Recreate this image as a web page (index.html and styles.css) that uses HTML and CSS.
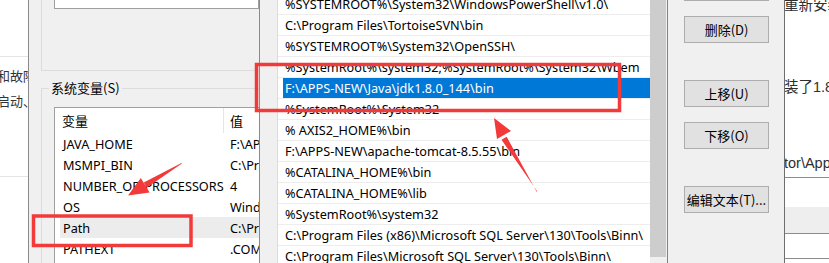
FILE: index.html
```html
<!DOCTYPE html>
<html lang="zh-CN">
<head>
    <meta charset="UTF-8">
    <meta name="viewport" content="width=device-width, initial-scale=1.0">
    <title>编辑环境变量 - Path</title>
    <link rel="stylesheet" href="styles.css">
</head>
<body>
    <div class="screen">
        <!-- article page behind the dialogs, left part -->
        <div class="page page-left">
            <div class="page-rule first"></div>
            <div class="page-text">
                <p>和故障</p>
                <p>启动、</p>
            </div>
            <div class="page-rule second"></div>
        </div>

        <!-- 环境变量 dialog -->
        <div class="env-dialog">
            <div class="group-user">
                <div class="listbox user-list"></div>
            </div>
            <fieldset class="group-sys">
                <legend>系统变量(S)</legend>
                <div class="listbox sys-list">
                    <div class="sys-head">
                        <div class="col-name">变量</div>
                        <div class="col-value">值</div>
                    </div>
                    <div class="sys-row"><span class="col-name">JAVA_HOME</span><span class="col-value">F:\APPS-NEW\Java\jdk1.8.0_144</span></div>
                    <div class="sys-row"><span class="col-name">MSMPI_BIN</span><span class="col-value">C:\Program Files\Microsoft MPI\Bin\</span></div>
                    <div class="sys-row"><span class="col-name">NUMBER_OF_PROCESSORS</span><span class="col-value">4</span></div>
                    <div class="sys-row"><span class="col-name">OS</span><span class="col-value">Windows_NT</span></div>
                    <div class="sys-row selected"><span class="col-name">Path</span><span class="col-value">C:\Program Files\Common Files\Oracle\Java\javapath</span></div>
                    <div class="sys-row"><span class="col-name">PATHEXT</span><span class="col-value">.COM;.EXE;.BAT;.CMD;.VBS;.VBE;.JS</span></div>
                </div>
            </fieldset>
        </div>

        <!-- 编辑环境变量 dialog -->
        <div class="edit-dialog">
            <div class="path-list">
                <div class="path-rows">
                    <div class="path-row"><span>%SYSTEMROOT%\System32\WindowsPowerShell\v1.0\</span></div>
                    <div class="path-row"><span>C:\Program Files\TortoiseSVN\bin</span></div>
                    <div class="path-row"><span>%SYSTEMROOT%\System32\OpenSSH\</span></div>
                    <div class="path-row"><span>%SystemRoot%\system32;%SystemRoot%\System32\Wbem</span></div>
                    <div class="path-row active"><span>F:\APPS-NEW\Java\jdk1.8.0_144\bin</span></div>
                    <div class="path-row"><span>%SystemRoot%\System32</span></div>
                    <div class="path-row"><span>% AXIS2_HOME%\bin</span></div>
                    <div class="path-row"><span>F:\APPS-NEW\apache-tomcat-8.5.55\bin</span></div>
                    <div class="path-row"><span>%CATALINA_HOME%\bin</span></div>
                    <div class="path-row"><span>%CATALINA_HOME%\lib</span></div>
                    <div class="path-row"><span>%SystemRoot%\system32</span></div>
                    <div class="path-row"><span>C:\Program Files (x86)\Microsoft SQL Server\130\Tools\Binn\</span></div>
                    <div class="path-row"><span>C:\Program Files\Microsoft SQL Server\130\Tools\Binn\</span></div>
                </div>
                <div class="scrollbar">
                    <div class="scroll-thumb"></div>
                </div>
            </div>
            <div class="btn-col">
                <button class="win-btn top">浏览(B)...</button>
                <button class="win-btn near">删除(D)</button>
                <button class="win-btn far">上移(U)</button>
                <button class="win-btn near">下移(O)</button>
                <button class="win-btn far">编辑文本(T)...</button>
            </div>
        </div>

        <!-- article page behind the dialogs, right part -->
        <div class="page page-right">
            <div class="page-right-inner">
                <div class="page-line">重新安装</div>
                <div class="page-line">装了1.8</div>
                <div class="page-line">tor\AppData</div>
                <div class="page-rule"></div>
                <div class="page-band"></div>
                <div class="page-rule"></div>
            </div>
        </div>

        <!-- red screenshot annotations -->
        <svg class="marks" width="829" height="263" viewBox="0 0 829 263">
            <rect x="256.5" y="64.5" width="363" height="46" />
            <rect x="33.5" y="216" width="157.5" height="29.5" />
            <polygon points="537.3,191.5 536.7,191.8 506.7,136.8 501.5,139.7" />
            <polygon points="494,118 511,131 497,139" />
            <polygon points="181.9,163.6 181.5,163 143.7,182.6 146.8,187.8" />
            <polygon points="128,195.5 140.8,177.9 149.6,192.5" />
        </svg>
    </div>
</body>
</html>
```

FILE: styles.css
```css
* {
    box-sizing: border-box;
}
body {
    margin: 0;
    background: #f0f0f0;
    font-family: "Noto Sans", "Noto Sans CJK SC", sans-serif;
    font-size: 12.7px;
    color: #000;
}
p {
    margin: 0;
}
.screen {
    position: relative;
    display: flex;
    width: 829px;
    height: 263px;
    overflow: hidden;
}

/* page behind */
.page {
    background: #fff;
    overflow: hidden;
    color: #333;
    font-family: "Noto Sans CJK SC", sans-serif;
    white-space: nowrap;
}
.page-left {
    flex: none;
    width: 28px;
}
.page-rule {
    height: 1px;
    background: #e4e4e4;
}
.page-left .first { margin-top: 56px; }
.page-text {
    margin: 6px 0 0 -3px;
    line-height: 25px;
    font-size: 13px;
}
.page-left .second { margin-top: 63px; }

.page-right {
    flex: 1;
    font-family: "Liberation Sans", "Noto Sans CJK SC", sans-serif;
    font-size: 14.5px;
    color: #2e2e2e;
}
.page-right-inner {
    display: grid;
    grid-template-rows: 24px 24px 24px 1px 27px 1px;
    row-gap: 0;
    margin-top: -7px;
    margin-left: -1px;
}
.page-line {
    height: 24px;
    line-height: 24px;
}
.page-line:nth-child(2) { margin-top: 58px; }
.page-line:nth-child(3) { margin-top: 52px; }
.page-right .page-rule {
    margin-top: 2px;
    background: #8c8c8c;
}
.page-band {
    margin-top: 29px;
    height: 27px;
    background: #eeeeee;
    border-bottom: 1px solid #8c8c8c;
}
.page-right .page-band + .page-rule {
    margin-top: 24px;
}
.page-right-inner {
    display: block;
}

/* environment variables dialog */
.env-dialog {
    flex: none;
    width: 231px;
    padding-left: 12px;
    border-left: 1px solid #8a8a8a;
    background: #f0f0f0;
    overflow: hidden;
}
.listbox {
    background: #fff;
    border: 1px solid #a0a0a0;
}
.group-user {
    width: 300px;
    height: 72px;
    padding-left: 12px;
    border-left: 1px solid #dcdcdc;
    border-bottom: 1px solid #dcdcdc;
}
.user-list {
    width: 205px;
    height: 10px;
    margin-top: -1px;
}
.group-sys {
    width: 300px;
    margin: 8px 0 0;
    padding: 10px 0 0 12px;
    border: 1px solid #dcdcdc;
    border-right: none;
    min-width: 0;
}
.group-sys legend {
    margin-left: -5px;
    padding: 0 2px;
    line-height: 18px;
    font-size: 13px;
    font-family: "Noto Sans CJK SC", sans-serif;
}
.sys-list {
    width: 260px;
    height: 200px;
    border-right: none;
}
.sys-head {
    display: flex;
    height: 25px;
    margin-left: 5px;
    line-height: 25px;
    font-size: 13px;
    font-family: "Noto Sans CJK SC", sans-serif;
}
.sys-head .col-name {
    width: 164px;
    padding-left: 2px;
    border-right: 1px solid #e5e5e5;
}
.sys-head .col-value {
    padding-left: 6px;
}
.sys-row {
    display: flex;
    height: 21px;
    margin-left: 5px;
    line-height: 22px;
    white-space: nowrap;
}
.sys-row .col-name {
    flex: none;
    width: 170px;
    padding-left: 3px;
}
.sys-row.selected {
    background: #ececec;
}

/* edit environment variable dialog */
.edit-dialog {
    flex: none;
    display: flex;
    width: 526px;
    padding-left: 17px;
    border-left: 1px solid #8a8a8a;
    border-right: 1px solid #6e6e6e;
    background: #f0f0f0;
}
.path-list {
    display: flex;
    width: 391px;
    height: 280px;
    margin-top: -7px;
    background: #fff;
    border-left: 1px solid #dcdcdc;
    border-right: 1px solid #828282;
}
.path-rows {
    flex: 1;
    padding-top: 1px;
}
.path-row {
    height: 21px;
    border-bottom: 1px solid #ededed;
    white-space: nowrap;
}
.path-row span {
    display: block;
    height: 20px;
    margin-left: 5px;
    padding-left: 2px;
    line-height: 20px;
}
.path-row.active span {
    background: #0078d7;
    color: #fff;
}
.scrollbar {
    flex: none;
    width: 17px;
    padding-right: 1px;
    background: #f0f0f0;
}
.scroll-thumb {
    height: 264px;
    background: #cdcdcd;
}
.btn-col {
    display: flex;
    flex-direction: column;
    padding-left: 16px;
}
.win-btn {
    width: 85px;
    height: 27px;
    padding: 0;
    background: #e1e1e1;
    border: 1px solid #adadad;
    font-family: "Noto Sans CJK SC", sans-serif;
    font-size: 13px;
    color: #000;
}
.win-btn.top { margin-top: -26px; }
.win-btn.near { margin-top: 15px; }
.win-btn.far { margin-top: 37px; }

/* annotations */
.marks {
    position: absolute;
    left: 0;
    top: 0;
    pointer-events: none;
}
.marks rect {
    fill: none;
    stroke: #f23a3a;
    stroke-width: 3.5;
}
.marks polygon {
    fill: #f23a3a;
}
```
